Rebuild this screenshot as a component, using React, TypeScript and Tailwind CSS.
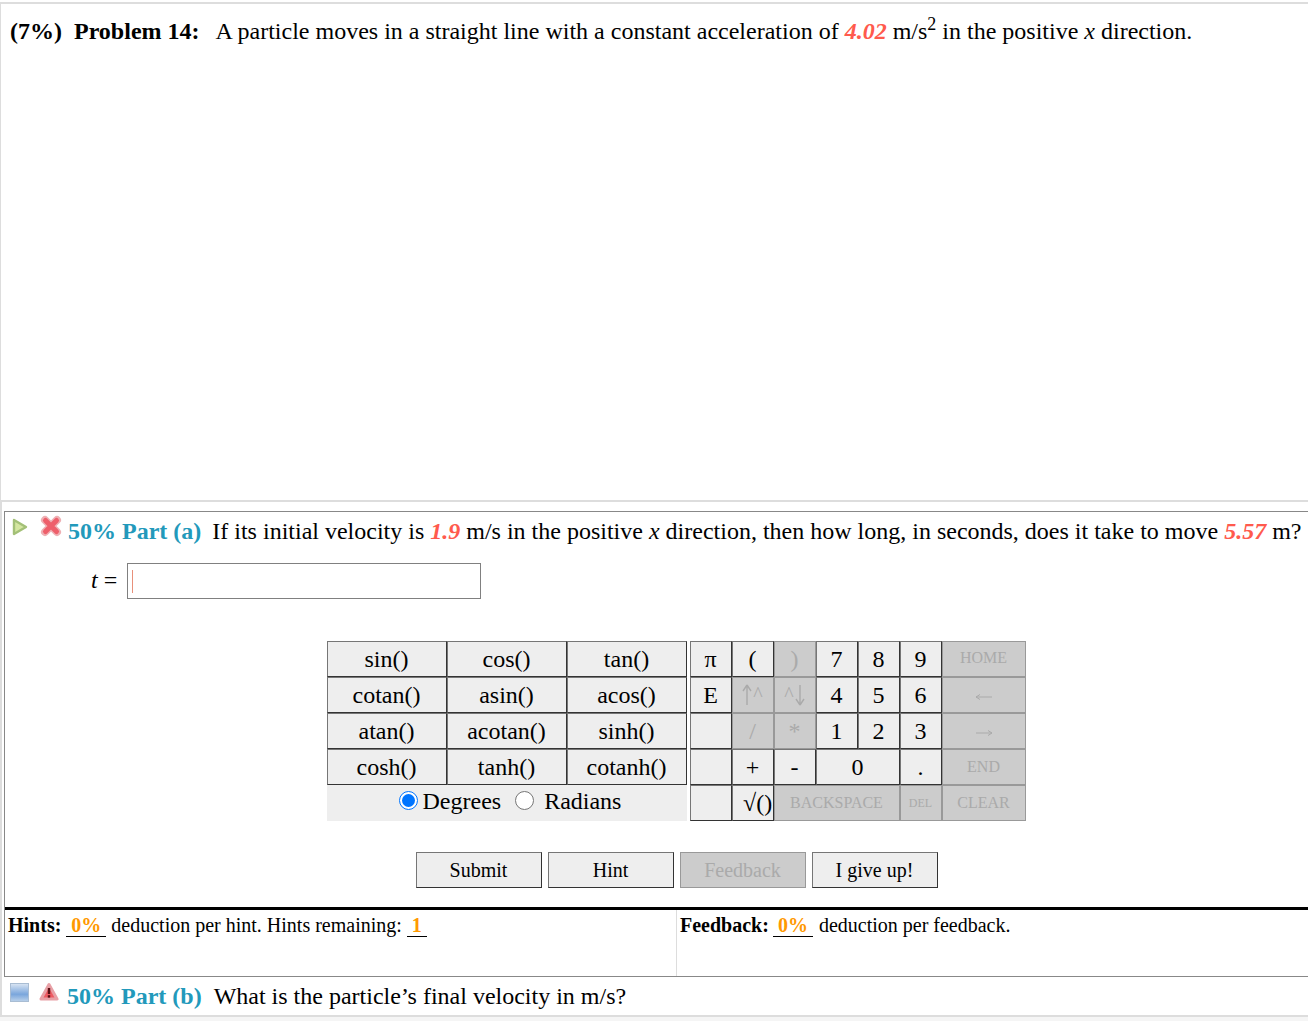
const fnRows = [
  ["sin()", "cos()", "tan()"],
  ["cotan()", "asin()", "acos()"],
  ["atan()", "acotan()", "sinh()"],
  ["cosh()", "tanh()", "cotanh()"],
];

type Key = { id: string; label?: string; off?: boolean; cls?: string };

const keys: Key[] = [
  { id: "pi", label: "π" }, { id: "lp", label: "(" }, { id: "rp", label: ")", off: true }, { id: "7", label: "7" }, { id: "8", label: "8" }, { id: "9", label: "9" },
  { id: "home", label: "HOME", off: true, cls: "col-span-2 text-[16px] pb-[2px]" },
  { id: "e", label: "E" }, { id: "up", off: true }, { id: "down", off: true }, { id: "4", label: "4" }, { id: "5", label: "5" }, { id: "6", label: "6" },
  { id: "left", off: true, cls: "col-span-2" },
  { id: "b1" }, { id: "div", label: "/", off: true }, { id: "mul", label: "*", off: true }, { id: "1", label: "1" }, { id: "2", label: "2" }, { id: "3", label: "3" },
  { id: "right", off: true, cls: "col-span-2" },
  { id: "b2" }, { id: "plus", label: "+" }, { id: "minus", label: "-" }, { id: "0", label: "0", cls: "col-span-2" }, { id: "dot", label: "." },
  { id: "end", label: "END", off: true, cls: "col-span-2 text-[16px]" },
  { id: "b3" }, { id: "sqrt", label: "√()", cls: "pl-[10px]" },
  { id: "back", label: "BACKSPACE", off: true, cls: "col-span-3 text-[16px]" },
  { id: "del", label: "DEL", off: true, cls: "text-[12px]" },
  { id: "clear", label: "CLEAR", off: true, cls: "col-span-2 text-[16px]" },
];

const onCls = "bg-[#eeeeee] text-black border-t-[#767676] border-l-[#767676] border-r-[#333333] border-b-[#333333] pr-px";
const offCls = "bg-[#cccccc] text-[#aaaaaa] border-[#999999] pr-px";

const Red = (props: { children: string }) => (
  <i className="text-[#ff5a4d] font-bold">{props.children}</i>
);

const Pct = (props: { children: string; w: string }) => (
  <span className={`inline-block text-center font-bold text-[#ff9900] border-b border-black leading-[21px] ${props.w}`}>
    {props.children}
  </span>
);

function PlayIcon() {
  return (
    <svg width="16" height="18" viewBox="0 0 16 18">
      <path d="M2 2 L14 9 L2 16 Z" fill="#d4e6a0" stroke="#a3c077" strokeWidth="2.4" strokeLinejoin="round" />
    </svg>
  );
}

function CrossIcon() {
  return (
    <svg width="22" height="22" viewBox="0 0 22 22">
      <path d="M5 5 L17 17 M17 5 L5 17" stroke="#eeb0b4" strokeWidth="8" strokeLinecap="round" />
      <path d="M5.5 5.5 L16.5 16.5 M16.5 5.5 L5.5 16.5" stroke="#ee5f6b" strokeWidth="5" strokeLinecap="round" />
    </svg>
  );
}

function SquareIcon() {
  return (
    <svg width="19" height="19" viewBox="0 0 19 19">
      <defs>
        <linearGradient id="sq" x1="0" y1="0" x2="0" y2="1">
          <stop offset="0" stopColor="#dbe6f3" />
          <stop offset="0.6" stopColor="#7aa6dc" />
          <stop offset="1" stopColor="#bcd2ea" />
        </linearGradient>
      </defs>
      <rect x="0.5" y="0.5" width="18" height="18" fill="url(#sq)" stroke="#a9bdd3" />
    </svg>
  );
}

function WarnIcon() {
  return (
    <svg width="20" height="20" viewBox="0 0 20 20">
      <path d="M10 2.5 L18 17 L2 17 Z" fill="#ee5a62" stroke="#e8a0a6" strokeWidth="3" strokeLinejoin="round" />
      <path d="M10 6 L10 12" stroke="#5a1015" strokeWidth="2.4" />
      <rect x="8.8" y="13.2" width="2.4" height="2.4" fill="#5a1015" />
    </svg>
  );
}

// thin arrows, the serif font draws them too small
function Arrow(props: { dir: "up" | "down" | "left" | "right" }) {
  if (props.dir === "left") {
    return (
      <svg width="18" height="8" viewBox="0 0 18 8" className="inline-block">
        <path d="M1 4 H17 M1 4 L5 1.5 M1 4 L5 6.5" stroke="#aaaaaa" fill="none" />
      </svg>
    );
  }
  if (props.dir === "right") {
    return (
      <svg width="18" height="8" viewBox="0 0 18 8" className="inline-block">
        <path d="M1 4 H17 M17 4 L13 1.5 M17 4 L13 6.5" stroke="#aaaaaa" fill="none" />
      </svg>
    );
  }
  return (
    <svg width="10" height="22" viewBox="0 0 10 22" className={`inline-block ${props.dir === "down" ? "rotate-180" : ""}`}>
      <path d="M5 1 V21 M5 1 L1 7 M5 1 L9 7" stroke="#aaaaaa" strokeWidth="1.4" fill="none" />
    </svg>
  );
}

function KeyFace(props: { k: Key }) {
  const { id, label } = props.k;
  if (id === "up") {
    return <span className="flex items-start justify-center">
      <Arrow dir="up" /><span className="text-[20px] leading-none ml-px">^</span>
    </span>;
  }
  if (id === "down") {
    return <span className="flex items-start justify-center">
      <span className="text-[20px] leading-none mr-px">^</span><Arrow dir="down" />
    </span>;
  }
  if (id === "left") return <Arrow dir="left" />;
  if (id === "right") return <Arrow dir="right" />;
  return <>{label}</>;
}

export default function App() {
  return (
    <div className="w-[1308px] h-[1021px] overflow-hidden bg-white text-black font-['Liberation_Serif',serif] pt-[2px]">
      <div className="h-[498px] border-t-2 border-l border-[#dddddd] pt-[12px] pl-[9px] text-[24px] leading-[30px] whitespace-nowrap">
        <b>(7%)</b>
        <b className="ml-[12px]">Problem 14:</b>
        <span className="ml-[16px]">
          A particle moves in a straight line with a constant acceleration of <Red>4.02</Red> m/s
          <sup className="text-[18px] leading-none">2</sup> in the positive <i>x</i> direction.
        </span>
      </div>

      <div className="border-t-2 border-l-2 border-[#dddddd]">
        <div className="mt-[9px] ml-[2px] border-t border-l border-[#888888]">
          <div className="flex items-start h-[41px] pl-[7px] pt-[4px] whitespace-nowrap text-[24px] leading-[30px]">
            <span className="mt-[2px]"><PlayIcon /></span>
            <span className="ml-[12px] mt-[-1px]"><CrossIcon /></span>
            <b className="ml-[6px] text-[#2299bb]">50% Part (a)</b>
            <span className="ml-[11px]">
              If its initial velocity is <Red>1.9</Red> m/s in the positive <i>x</i> direction, then how long, in seconds, does it take to move <Red>5.57</Red> m?
            </span>
          </div>

          <div className="flex items-center h-[36px] mt-[10px] pl-[86px] text-[24px]">
            <span className="w-[36px] mt-[-2px]"><i>t</i> =</span>
            <div className="w-[354px] h-[36px] border border-[#808080] flex items-center pl-[4px]">
              <div className="w-px h-[23px] bg-[#e8907a]" />
            </div>
          </div>

          <div className="flex mt-[42px] ml-[322px] text-[24px]">
            <div className="w-[360px]">
              <div className="grid grid-cols-3">
                {fnRows.flat().map((f) => (
                  <button key={f} className={`h-[36px] border ${onCls} leading-none`}>{f}</button>
                ))}
              </div>
              <div className="h-[36px] bg-[#eeeeee] flex items-center justify-center">
                <span className="flex items-center ml-[6px] mt-[-5px]">
                  <span className="w-[19px] h-[19px] rounded-full border border-[#0075ff] bg-white flex items-center justify-center">
                    <span className="w-[13px] h-[13px] rounded-full bg-[#0075ff]" />
                  </span>
                  <span className="ml-[5px]">Degrees</span>
                  <span className="ml-[14px] w-[19px] h-[19px] rounded-full border border-[#767676] bg-white" />
                  <span className="ml-[10px]">Radians</span>
                </span>
              </div>
            </div>

            <div className="ml-[3px] grid grid-cols-[repeat(8,42px)] auto-rows-[36px]">
              {keys.map((k) => (
                <button
                  key={k.id}
                  className={`border leading-none whitespace-nowrap overflow-hidden ${k.off ? offCls : onCls} ${k.cls ?? ""}`}
                >
                  <KeyFace k={k} />
                </button>
              ))}
            </div>
          </div>

          <div className="flex gap-[6px] mt-[31px] ml-[411px] text-[20px]">
            <button className={`w-[126px] h-[36px] border ${onCls}`}>Submit</button>
            <button className={`w-[126px] h-[36px] border ${onCls}`}>Hint</button>
            <button className={`w-[126px] h-[36px] border ${offCls}`}>Feedback</button>
            <button className={`w-[126px] h-[36px] border ${onCls}`}>I give up!</button>
          </div>

          <div className="mt-[19px] h-[70px] border-t-[3px] border-black border-b border-b-[#888888] flex text-[20px] leading-[24px] whitespace-nowrap">
            <div className="w-[672px] h-full border-r border-[#dddddd] pl-[3px] pt-[3px]">
              <b>Hints:</b>
              <Pct w="w-[40px] ml-[5px]">0%</Pct>
              <span className="ml-[5px]">deduction per hint. Hints remaining:</span>
              <Pct w="w-[20px] ml-[5px]">1</Pct>
            </div>
            <div className="pl-[3px] pt-[3px]">
              <b>Feedback:</b>
              <Pct w="w-[40px] ml-[4px]">0%</Pct>
              <span className="ml-[6px]">deduction per feedback.</span>
            </div>
          </div>
        </div>

        <div className="flex items-start h-[40px] pl-[8px] pt-[4px] whitespace-nowrap text-[24px] leading-[30px] border-b-2 border-[#dddddd]">
          <span className="mt-[2px]"><SquareIcon /></span>
          <span className="ml-[10px] mt-[1px]"><WarnIcon /></span>
          <b className="ml-[8px] text-[#2299bb]">50% Part (b)</b>
          <span className="ml-[12px]">What is the particle’s final velocity in m/s?</span>
        </div>
      </div>
      <div className="h-[10px] bg-[#f5f5f5]" />
    </div>
  );
}
